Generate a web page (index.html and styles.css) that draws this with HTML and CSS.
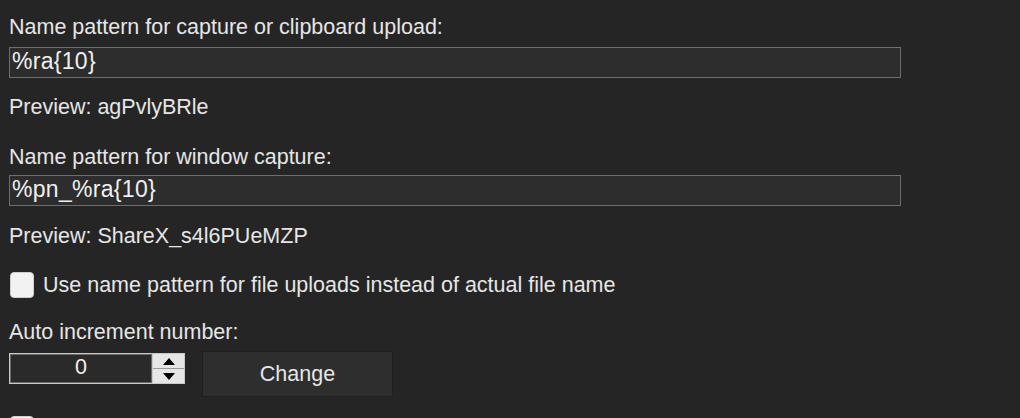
FILE: index.html
```html
<!DOCTYPE html>
<html>
<head>
<meta charset="utf-8">
<link rel="stylesheet" href="styles.css">
</head>
<body>
<div class="panel">
  <div class="label l1">Name pattern for capture or clipboard upload:</div>
  <div class="textbox t1">%ra{10}</div>
  <div class="label p1">Preview: agPvlyBRle</div>
  <div class="label l2">Name pattern for window capture:</div>
  <div class="textbox t2">%pn_%ra{10}</div>
  <div class="label p2">Preview: ShareX_s4l6PUeMZP</div>
  <label class="check-row c1">
    <span class="checkbox"></span>
    <span class="check-text">Use name pattern for file uploads instead of actual file name</span>
  </label>
  <div class="label auto">Auto increment number:</div>
  <div class="num-row">
    <div class="numeric">
      <div class="num-field">0</div>
      <div class="spin">
        <div class="spin-btn"><svg width="12" height="7" viewBox="0 0 12 7"><path d="M6 0 L12 7 L0 7 Z" fill="#000"/></svg></div>
        <div class="spin-btn"><svg width="12" height="7" viewBox="0 0 12 7"><path d="M0 0 L12 0 L6 7 Z" fill="#000"/></svg></div>
      </div>
    </div>
    <button class="btn">Change</button>
  </div>
  <label class="check-row c2">
    <span class="checkbox"></span>
  </label>
</div>
</body>
</html>
```

FILE: styles.css
```css
html, body {
  margin: 0;
  padding: 0;
  background: #252525;
  overflow: hidden;
}
body {
  width: 1020px;
  height: 418px;
  font-family: "Liberation Sans", Arial, sans-serif;
  font-size: 21.5px;
  color: #e6e6e6;
}
.panel {
  display: flex;
  flex-direction: column;
  align-items: flex-start;
  padding-left: 9px;
}
.label {
  line-height: 24px;
  height: 24px;
  white-space: nowrap;
}
.l1 { margin-top: 15px; }
.t1 { margin-top: 8px; }
.p1 { margin-top: 17px; }
.l2 { margin-top: 26px; }
.t2 { margin-top: 6px; }
.p2 { margin-top: 18px; }
.textbox {
  box-sizing: border-box;
  width: 892px;
  height: 31px;
  background: #2d2d2d;
  border: 1px solid #6e6e6e;
  padding-left: 2px;
  font-size: 23px;
  letter-spacing: 0.3px;
  line-height: 27px;
  color: #f0f0f0;
}
.check-row {
  display: flex;
  align-items: center;
  gap: 9px;
  height: 26px;
}
.c1 { margin-top: 24px; }
.checkbox {
  box-sizing: border-box;
  width: 24px;
  height: 26px;
  margin-left: 1px;
  border-radius: 4px;
  background: #f2f2f2;
  border: 1px solid #cfcfcf;
  flex: none;
}
.check-text { line-height: 24px; }
.auto { margin-top: 22px; }
.num-row {
  display: flex;
  align-items: flex-start;
  gap: 17px;
  margin-top: 7px;
}
.numeric {
  box-sizing: border-box;
  display: flex;
  width: 176px;
  height: 31px;
  margin-top: 2px;
  border: 1px solid #c9c9c9;
  background: #c9c9c9;
}
.num-field {
  box-sizing: border-box;
  width: 142px;
  height: 29px;
  background: #2a2a2a;
  border: 1px solid #6a6a6a;
  text-align: center;
  line-height: 25px;
  color: #f0f0f0;
}
.spin {
  display: flex;
  flex-direction: column;
  flex: 1;
  gap: 1px;
  margin-left: 1px;
  background: #9a9a9a;
}
.spin-btn {
  flex: 1;
  display: flex;
  align-items: center;
  justify-content: center;
  background: #e6e6e6;
}
.btn {
  box-sizing: border-box;
  width: 191px;
  height: 46px;
  background: #2e2e2e;
  border: 1px solid #1f1f1f;
  color: #e6e6e6;
  font-family: "Liberation Sans", Arial, sans-serif;
  font-size: 21.5px;
  padding: 0;
  margin: 0;
}
.c2 { margin-top: 19px; }
```
